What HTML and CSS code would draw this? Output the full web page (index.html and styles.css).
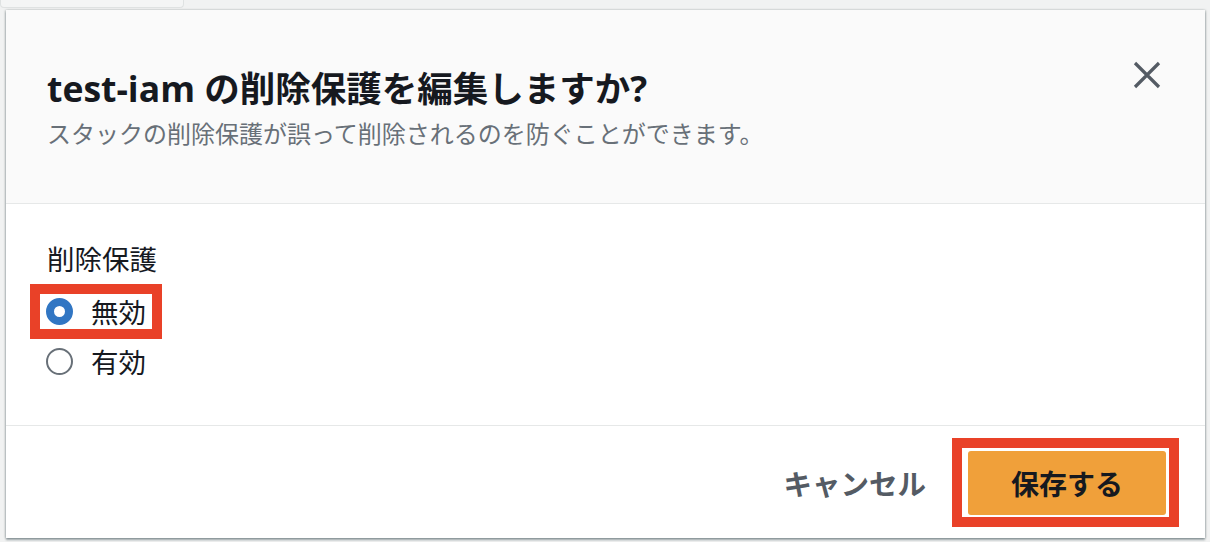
FILE: index.html
```html
<!DOCTYPE html>
<html lang="ja">
<head>
<meta charset="utf-8">
<title>削除保護の編集</title>
<link rel="stylesheet" href="styles.css">
</head>
<body>
<div class="backdrop">
  <div class="bg-strip"><span class="bg-box"></span></div>
  <div class="modal" role="dialog">
    <div class="modal-header">
      <div class="header-text">
        <h2 class="title">test-iam の削除保護を編集しますか?</h2>
        <p class="subtitle">スタックの削除保護が誤って削除されるのを防ぐことができます。</p>
      </div>
      <button class="close" aria-label="閉じる">
        <svg width="28" height="28" viewBox="0 0 28 28"><path d="M2 2 L26 26 M26 2 L2 26" stroke="#545b64" stroke-width="3.2" fill="none"/></svg>
      </button>
    </div>
    <div class="modal-body">
      <div class="field-label">削除保護</div>
      <div class="radios">
        <label class="radio highlight"><span class="dot checked"></span><span class="radio-text">無効</span></label>
        <label class="radio"><span class="dot"></span><span class="radio-text">有効</span></label>
      </div>
    </div>
    <div class="modal-footer">
      <button class="btn-cancel">キャンセル</button>
      <span class="save-frame"><button class="btn-primary">保存する</button></span>
    </div>
  </div>
</div>
</body>
</html>
```

FILE: styles.css
```css
* { box-sizing: border-box; }
html, body { margin: 0; padding: 0; }
body {
  width: 1210px;
  height: 542px;
  overflow: hidden;
  background: #f1f2f2;
  font-family: "Open Sans", "Noto Sans CJK JP", sans-serif;
  color: #16191f;
}
.backdrop {
  position: relative;
  height: 542px;
}
.bg-strip {
  height: 8px;
  display: flex;
}
.bg-box {
  width: 184px;
  height: 8px;
  border: 1px solid #dfe2e2;
  border-top: none;
  border-radius: 0 0 4px 4px;
  background: #f4f5f5;
}
.modal {
  position: absolute;
  left: 6px;
  top: 10px;
  width: 1199px;
  height: 528px;
  background: #ffffff;
  display: flex;
  flex-direction: column;
  box-shadow: 0 2px 2px rgba(0, 28, 36, 0.35), -1px 0 2px rgba(0, 28, 36, 0.18), 1px 0 2px rgba(0, 28, 36, 0.18);
}
.modal-header {
  height: 194px;
  background: #fafafa;
  border-bottom: 1px solid #e6e8e8;
  padding: 56px 44px 0 41px;
  display: flex;
  justify-content: space-between;
  align-items: flex-start;
}
.title {
  margin: 0;
  font-size: 35.5px;
  line-height: 44px;
  font-weight: 700;
  color: #16191f;
  font-family: "Open Sans", "Noto Sans CJK JP", sans-serif;
}
.subtitle {
  margin: 7px 0 0 0;
  font-size: 24px;
  line-height: 32px;
  color: #687078;
  font-family: "Noto Sans CJK JP", sans-serif;
}
.close {
  background: none;
  border: none;
  padding: 0;
  margin-top: -5px;
  width: 28px;
  height: 28px;
  cursor: pointer;
}
.close svg { display: block; }
.modal-body {
  height: 222px;
  border-bottom: 1px solid #e6e8e8;
  padding: 36px 0 0 34px;
  font-family: "Noto Sans CJK JP", sans-serif;
}
.field-label {
  margin-left: 7px;
  font-size: 27.5px;
  line-height: 36px;
  color: #16191f;
}
.radios {
  margin-top: 18px;
  display: flex;
  flex-direction: column;
  align-items: flex-start;
  gap: 15px;
}
.radio {
  height: 35px;
  display: inline-flex;
  align-items: center;
  padding: 0 6px 0 6px;
}
.radio.highlight {
  outline: 10px solid #e94128;
  background: #ffffff;
}
.dot {
  width: 27px;
  height: 27px;
  border-radius: 50%;
  border: 2.5px solid #687078;
  background: #fff;
  flex: none;
}
.dot.checked {
  border: 8.5px solid #3176c3;
}
.radio-text {
  margin-left: 18px;
  font-size: 27.5px;
  line-height: 35px;
  color: #16191f;
}
.modal-footer {
  flex: 1;
  display: flex;
  justify-content: flex-end;
  align-items: center;
  padding: 0 26px 0 0;
  font-family: "Noto Sans CJK JP", sans-serif;
}
.btn-cancel {
  background: none;
  border: none;
  font-family: "Noto Sans CJK JP", sans-serif;
  font-weight: 700;
  font-size: 28.5px;
  color: #545b64;
  padding: 0;
  margin-right: 26px;
  cursor: pointer;
}
.save-frame {
  display: inline-flex;
  border: 10px solid #e94128;
  background: #ffffff;
  padding: 3px 3px 2px 6px;
}
.btn-primary {
  width: 198px;
  height: 64px;
  background: #f0a03a;
  border: none;
  border-radius: 3px;
  font-family: "Noto Sans CJK JP", sans-serif;
  font-weight: 700;
  font-size: 28px;
  color: #16191f;
  cursor: pointer;
  padding: 0;
}
```
